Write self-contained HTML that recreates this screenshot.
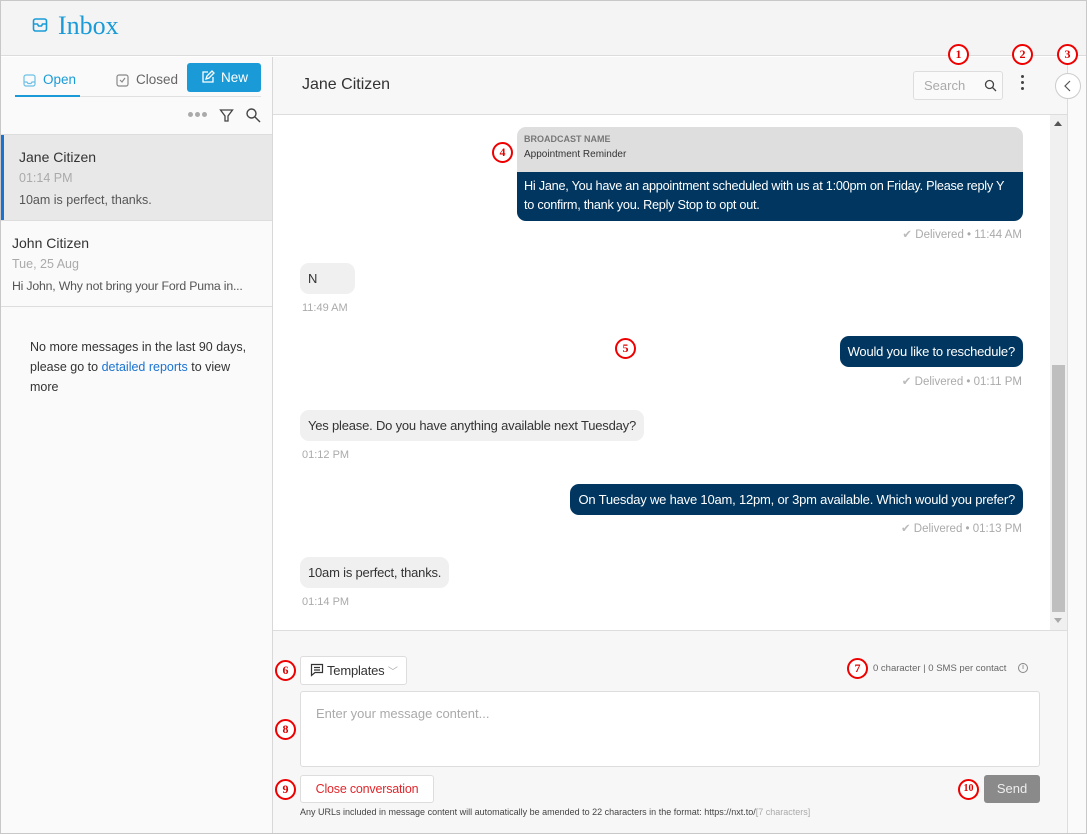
<!DOCTYPE html>
<html><head><meta charset="utf-8"><style>
*{box-sizing:border-box;margin:0;padding:0}
body{width:1087px;height:834px;overflow:hidden;font-family:"Liberation Sans",sans-serif;background:#fff;position:relative;color:#333}
.a{position:absolute}
.ann{position:absolute;width:21px;height:21px;border:2.5px solid #e00;border-radius:50%;background:#fff;color:#d00;font:bold 12px "Liberation Serif",serif;text-align:center;line-height:16px}
.in{background:#f0f0f0;border-radius:9px;color:#333;font-size:13px;letter-spacing:-0.2px;padding:0 8px;height:31px;line-height:31px;white-space:nowrap}
.out{background:#00365f;color:#fff;border-radius:9px;font-size:13px;letter-spacing:-0.2px;padding:0 8px;height:31px;line-height:31px;white-space:nowrap}
.ts{font-size:11px;color:#aaa}
.dl{font-size:11.5px;color:#aaa;text-align:right}
</style></head><body>
<div class="a" style="left:0;top:0;width:1087px;height:834px;border:1px solid #c8c8c8;z-index:9;pointer-events:none"></div>
<div class="a" style="left:0;top:0;width:1087px;height:56px;background:#f4f4f4;border-bottom:1px solid #dcdcdc"></div>
<svg class="a" style="left:32px;top:17px" width="16" height="16" viewBox="0 0 16 16" fill="none" stroke="#1a9bd7" stroke-width="1.6"><rect x="1.5" y="2" width="13" height="12" rx="2"/><path d="M1.5 7h4l1 2h3l1-2h4"/></svg>
<div class="a" style="left:58px;top:11px;font:26px 'Liberation Serif',serif;color:#1a9bd7">Inbox</div>
<div class="a" style="left:0;top:57px;width:273px;height:777px;background:#fafafa;border-right:1px solid #d8d8d8"></div>
<div class="a" style="left:15px;top:96px;width:246px;height:1px;background:#e0e0e0"></div>
<div class="a" style="left:15px;top:95px;width:65px;height:2px;background:#1a9bd7"></div>
<svg class="a" style="left:23px;top:74px" width="13" height="13" viewBox="0 0 13 13" fill="none" stroke="#6cc0e5" stroke-width="1.2"><rect x="1" y="1" width="11" height="11" rx="2"/><path d="M1 8h3l1 1.5h3L9 8h3"/></svg>
<div class="a" style="left:43px;top:72px;font-size:13.5px;color:#1a9bd7">Open</div>
<svg class="a" style="left:116px;top:74px" width="13" height="13" viewBox="0 0 13 13" fill="none" stroke="#888" stroke-width="1.2"><rect x="1" y="1" width="11" height="11" rx="2"/><path d="M4 6l2 2 3-4"/></svg>
<div class="a" style="left:136px;top:72px;font-size:13.5px;color:#666">Closed</div>
<div class="a" style="left:187px;top:63px;width:74px;height:29px;background:#1a9bd7;border-radius:3px;color:#fff;font-size:13.5px;line-height:29px;padding-left:34px">New</div>
<svg class="a" style="left:201px;top:70px" width="14" height="14" viewBox="0 0 14 14" fill="none" stroke="#fff" stroke-width="1.3"><path d="M7 2H2v10h10V7"/><path d="M5 9l1-3 5-5 2 2-5 5z"/></svg>
<div class="a" style="left:188px;top:112px;width:5px;height:5px;border-radius:50%;background:#aaa;box-shadow:7px 0 0 #aaa,14px 0 0 #aaa"></div>
<svg class="a" style="left:219px;top:108px" width="15" height="15" viewBox="0 0 15 15" fill="none" stroke="#444" stroke-width="1.3"><path d="M1.5 2h12L9 8v5H6V8z"/></svg>
<svg class="a" style="left:245px;top:107px" width="16" height="16" viewBox="0 0 16 16" fill="none" stroke="#444" stroke-width="1.4"><circle cx="6.5" cy="6.5" r="4.5"/><path d="M10 10l5 5"/></svg>
<div class="a" style="left:0;top:134px;width:272px;height:1px;background:#ddd"></div>
<div class="a" style="left:0;top:135px;width:272px;height:85px;background:#e8e8e8;border-left:4px solid #1a73d1"></div>
<div class="a" style="left:19px;top:149px;font-size:14px;color:#333">Jane Citizen</div>
<div class="a" style="left:19px;top:171px;font-size:12.5px;color:#aaa">01:14 PM</div>
<div class="a" style="left:19px;top:193px;font-size:12.5px;color:#555">10am is perfect, thanks.</div>
<div class="a" style="left:0;top:220px;width:272px;height:1px;background:#ddd"></div>
<div class="a" style="left:12px;top:235px;font-size:14px;color:#333">John Citizen</div>
<div class="a" style="left:12px;top:257px;font-size:12.5px;color:#aaa">Tue, 25 Aug</div>
<div class="a" style="left:12px;top:279px;font-size:12.3px;letter-spacing:-0.2px;color:#555">Hi John, Why not bring your Ford Puma in...</div>
<div class="a" style="left:0;top:306px;width:272px;height:1px;background:#ddd"></div>
<div class="a" style="left:30px;top:337px;width:220px;font-size:12.5px;line-height:20px;color:#333">No more messages in the last 90 days, please go to <span style="color:#1a73d1">detailed reports</span> to view more</div>
<div class="a" style="left:273px;top:57px;width:794px;height:58px;background:#f7f7f7;border-bottom:1px solid #ddd"></div>
<div class="a" style="left:302px;top:76px;font-size:16px;color:#333">Jane Citizen</div>
<div class="a" style="left:913px;top:71px;width:90px;height:29px;border:1px solid #ddd;border-radius:3px;background:#fafafa;font-size:13px;color:#aaa;line-height:27px;padding-left:10px">Search</div>
<svg class="a" style="left:984px;top:79px" width="13" height="13" viewBox="0 0 13 13" fill="none" stroke="#444" stroke-width="1.3"><circle cx="5.5" cy="5.5" r="4"/><path d="M8.5 8.5l3.5 3.5"/></svg>
<div class="a" style="left:1021px;top:75px;width:3px;height:3px;background:#444;border-radius:50%;box-shadow:0 6px 0 #444,0 12px 0 #444"></div>
<div class="a" style="left:1067px;top:57px;width:1px;height:777px;background:#ddd"></div>
<div class="a" style="left:1068px;top:57px;width:18px;height:777px;background:#fafafa"></div>
<div class="a" style="left:1055px;top:73px;width:26px;height:26px;border:1px solid #ccc;border-radius:50%;background:#fff"></div>
<svg class="a" style="left:1063px;top:79px" width="10" height="14" viewBox="0 0 10 14" fill="none" stroke="#555" stroke-width="1.2"><path d="M7 2L2 7l5 5"/></svg>
<div class="ann" style="left:948px;top:44px">1</div>
<div class="ann" style="left:1012px;top:44px">2</div>
<div class="ann" style="left:1057px;top:44px">3</div>
<div class="a" style="left:1050px;top:115px;width:17px;height:515px;background:#f0f0f0"></div>
<div class="a" style="left:1052px;top:365px;width:13px;height:247px;background:#bfbfbf"></div>
<div class="a" style="left:1054px;top:121px;width:0;height:0;border-left:4px solid transparent;border-right:4px solid transparent;border-bottom:5px solid #555"></div>
<div class="a" style="left:1054px;top:618px;width:0;height:0;border-left:4px solid transparent;border-right:4px solid transparent;border-top:5px solid #aaa"></div>
<div class="a" style="left:517px;top:127px;width:506px;height:94px;border-radius:9px;overflow:hidden">
 <div style="background:#dedede;height:45px;padding:7px 7px;font-size:9px;color:#555"><div style="font-weight:bold;color:#777">BROADCAST NAME</div><div style="margin-top:5px;font-size:10px;color:#333">Appointment Reminder</div></div>
 <div style="background:#00365f;color:#fff;font-size:12.7px;letter-spacing:-0.25px;line-height:19px;padding:5px 7px;height:49px">Hi Jane, You have an appointment scheduled with us at 1:00pm on Friday. Please reply Y to confirm, thank you. Reply Stop to opt out.</div>
</div>
<div class="ann" style="left:492px;top:142px">4</div>
<div class="a dl" style="left:800px;top:227px;width:222px"><span style="color:#bbb">✔</span> Delivered • 11:44 AM</div>
<div class="a in" style="left:300px;top:263px;width:55px">N</div>
<div class="a ts" style="left:302px;top:302px">11:49 AM</div>
<div class="ann" style="left:615px;top:338px">5</div>
<div class="a out" style="right:64px;top:336px">Would you like to reschedule?</div>
<div class="a dl" style="left:800px;top:374px;width:222px"><span style="color:#bbb">✔</span> Delivered • 01:11 PM</div>
<div class="a in" style="left:300px;top:410px">Yes please. Do you have anything available next Tuesday?</div>
<div class="a ts" style="left:302px;top:449px">01:12 PM</div>
<div class="a out" style="right:64px;top:484px">On Tuesday we have 10am, 12pm, or 3pm available. Which would you prefer?</div>
<div class="a dl" style="left:800px;top:521px;width:222px"><span style="color:#bbb">✔</span> Delivered • 01:13 PM</div>
<div class="a in" style="left:300px;top:557px">10am is perfect, thanks.</div>
<div class="a ts" style="left:302px;top:596px">01:14 PM</div>
<div class="a" style="left:273px;top:630px;width:794px;height:204px;background:#f7f7f7;border-top:1px solid #ddd"></div>
<div class="a" style="left:300px;top:656px;width:107px;height:29px;border:1px solid #ddd;border-radius:3px;background:#fff;font-size:13px;color:#333;line-height:27px;padding-left:26px;letter-spacing:-0.2px">Templates <span style="color:#aaa;font-size:10px">﹀</span></div>
<svg class="a" style="left:310px;top:663px" width="14" height="14" viewBox="0 0 14 14" fill="none" stroke="#333" stroke-width="1.2"><path d="M1.5 1.5h11v8H5l-3.5 3z"/><path d="M4 4.5h6M4 7h6"/></svg>
<div class="ann" style="left:275px;top:660px">6</div>
<div class="a" style="left:873px;top:663px;font-size:9.5px;color:#666">0 character | 0 SMS per contact</div>
<div class="a" style="left:1018px;top:663px;width:10px;height:10px;border:1px solid #888;border-radius:50%;font-size:7px;text-align:center;line-height:8px;color:#666">i</div>
<div class="ann" style="left:847px;top:658px">7</div>
<div class="a" style="left:300px;top:691px;width:740px;height:76px;border:1px solid #ddd;border-radius:3px;background:#fff;font-size:13px;color:#aaa;padding:14px 15px">Enter your message content...</div>
<div class="ann" style="left:275px;top:719px">8</div>
<div class="a" style="left:300px;top:775px;width:134px;height:28px;border:1px solid #ddd;border-radius:3px;background:#fff;font-size:12.5px;letter-spacing:-0.2px;color:#e0272c;line-height:26px;text-align:center">Close conversation</div>
<div class="ann" style="left:275px;top:779px">9</div>
<div class="a" style="left:300px;top:807px;font-size:9px;color:#444">Any URLs included in message content will automatically be amended to 22 characters in the format: https://nxt.to/<span style="color:#aaa">[7 characters]</span></div>
<div class="a" style="left:984px;top:775px;width:56px;height:28px;background:#8a8a8a;border-radius:3px;color:#eee;font-size:13px;line-height:28px;text-align:center">Send</div>
<div class="ann" style="left:958px;top:779px;font-size:10px">10</div>
</body></html>
